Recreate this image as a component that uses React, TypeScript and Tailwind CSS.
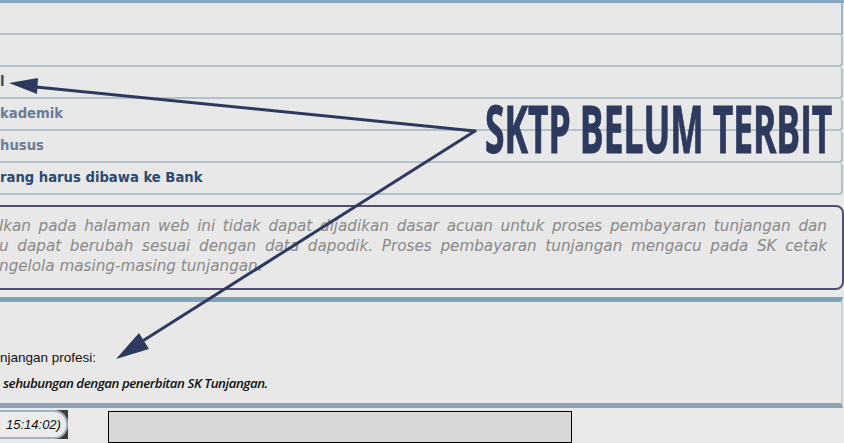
import React from "react";

const rows = [
  { text: "", tone: "" },
  { text: "l", tone: "text-[#33466a]" },
  { text: "kademik", tone: "text-[#6b7d95]" },
  { text: "husus", tone: "text-[#6b7d95]" },
  { text: "rang harus dibawa ke Bank", tone: "text-[#294a72]" },
];

function Arrows() {
  return (
    <svg
      className="pointer-events-none absolute left-0 top-0"
      width="844"
      height="443"
      viewBox="0 0 844 443"
    >
      <g stroke="#2d3a5e" strokeWidth="3" strokeLinecap="round" fill="none">
        <path d="M475 131 L36 87" />
        <path d="M475 131 L141 342" />
      </g>
      <g fill="#2d3a5e">
        <polygon points="9,83 38,78 37,94" />
        <polygon points="116,359 139,333 149,349" />
      </g>
    </svg>
  );
}

export default function App() {
  return (
    <div className="relative w-[844px] h-[443px] overflow-hidden bg-[#e9e9e9] font-['DejaVu_Sans',sans-serif]">
      <div className="h-[3px] bg-[#88a6bd]" />

      {/* list of menu rows */}
      <div className="w-[843px]">
        <div className="h-[32px] border-b-2 border-r-2 border-b-[#b3c1cb] border-r-[#9cb6ca] bg-[#e8e8e8]" />
        {rows.map((row, i) => (
          <div
            key={i}
            className="flex h-[32px] items-center rounded-r-[4px] border-b-2 border-r-2 border-[#b3c1cb] bg-[#e8e8e8]"
          >
            <span className={`text-[13.2px] font-bold ${row.tone}`}>
              {row.text}
            </span>
          </div>
        ))}
      </div>

      {/* disclaimer */}
      <div className="-ml-[4px] mt-[10px] h-[85px] w-[848px] rounded-r-[8px] border-2 border-[#524f74] bg-[#e8e8e8] pl-[1px] pr-[15px] pt-[9px] text-[15.2px] italic leading-[20px] text-[#8a8a8a]">
        <div className="text-justify [text-align-last:justify]">
          lkan pada halaman web ini tidak dapat dijadikan dasar acuan untuk proses pembayaran tunjangan dan
        </div>
        <div className="text-justify [text-align-last:justify]">
          u dapat berubah sesuai dengan data dapodik. Proses pembayaran tunjangan mengacu pada SK cetak
        </div>
        <div>ngelola masing-masing tunjangan.</div>
      </div>

      {/* info panel */}
      <div className="mt-[7px] w-[843px] border-y-[5px] border-t-[#7fa3b8] border-b-[#8ca2b4] border-r-2 border-r-[#c9d4dc] bg-[#e8e8e8]">
        <div className="h-[101px] pt-[48px]">
          <div className="text-[13.5px] leading-[16px] text-[#111] font-['Liberation_Sans',sans-serif]">
            njangan profesi:
          </div>
          <div className="mt-[9px] pl-[3px] text-[13.3px] font-semibold italic leading-[16px] tracking-[-0.45px] text-[#111] font-['Open_Sans',sans-serif]">
            sehubungan dengan penerbitan SK Tunjangan.
          </div>
        </div>
      </div>

      {/* status row */}
      <div className="flex items-start pt-[2px]">
        <div className="bg-[#3c3c3c]">
          <div className="-ml-[2px] flex h-[29px] w-[70px] items-center rounded-r-[14px] border-2 border-[#9fb2bf] bg-[#ececec] pl-[6px] text-[13px] italic text-[#111] font-['Liberation_Sans',sans-serif]">
            15:14:02)
          </div>
        </div>
        <div className="ml-[40px] mt-[1px] h-[32px] w-[464px] border border-black bg-[#d7d7d7]" />
      </div>

      {/* overlay caption */}
      <div className="absolute left-[485px] top-[94px] whitespace-nowrap">
        <span className="inline-block origin-left scale-x-[0.528] text-[67px] font-bold leading-none text-[#2d3a5e] [-webkit-text-stroke:1px_#2d3a5e] font-['Open_Sans',sans-serif]">
          SKTP BELUM TERBIT
        </span>
      </div>

      <Arrows />
    </div>
  );
}
